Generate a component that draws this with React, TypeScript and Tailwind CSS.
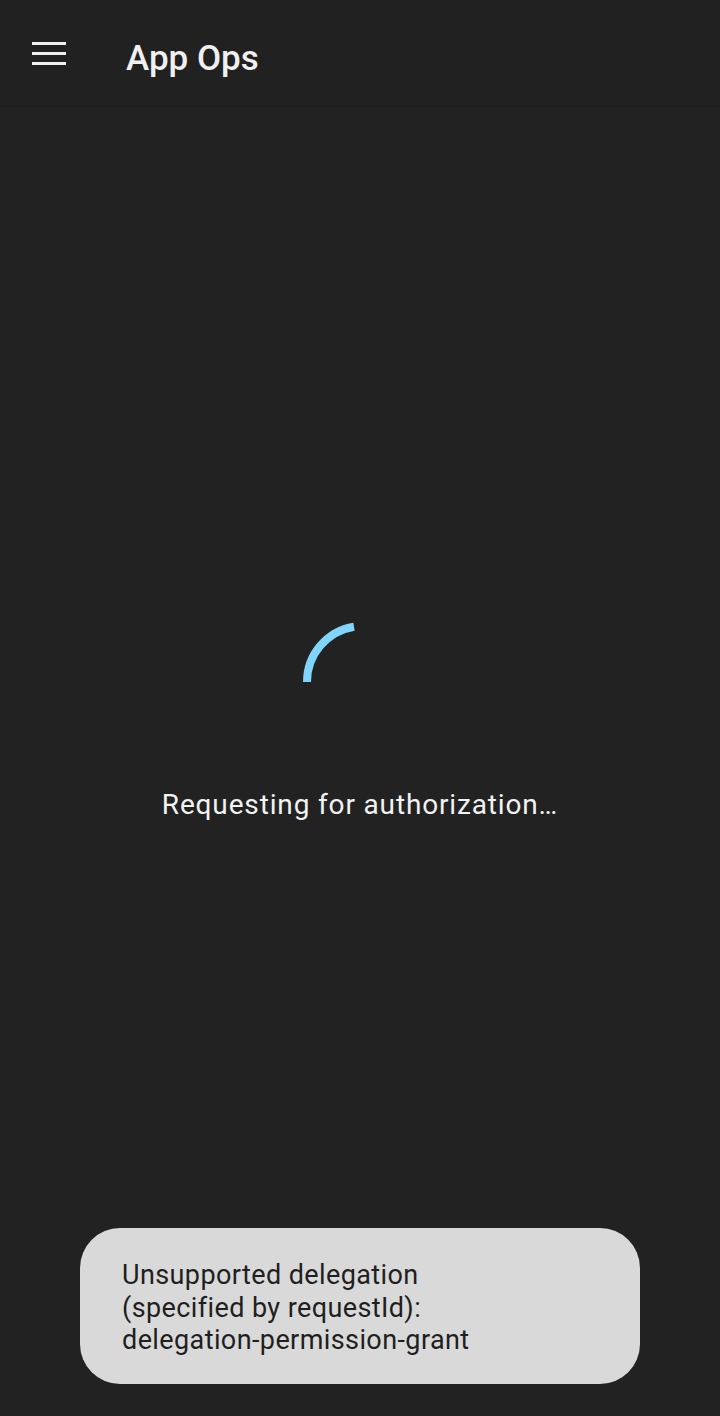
import React from "react";

export default function App() {
  return (
    <div className="w-[720px] h-[1416px] bg-[#222222] flex flex-col overflow-hidden" style={{ fontFamily: "Roboto, 'Noto Sans', sans-serif" }}>
      {/* Toolbar */}
      <header className="h-[107px] shrink-0 bg-[#212121] border-b border-[#1c1c1c] flex items-center">
        <div className="w-[98px] pl-[32px] flex flex-col gap-[7px]">
          <div className="w-[34px] h-[3px] bg-[#f0f0f0]" />
          <div className="w-[34px] h-[3px] bg-[#f0f0f0]" />
          <div className="w-[34px] h-[3px] bg-[#f0f0f0]" />
        </div>
        <h1 className="ml-[28px] text-[35px] font-medium text-[#f0f0f0] leading-none pt-[10px]">App Ops</h1>
      </header>

      {/* Content */}
      <main className="flex-1 flex flex-col items-center relative">
        <div className="mt-[508px]">
          <svg width="124" height="124" viewBox="0 0 124 124">
            <path d="M 9 67 A 56 56 0 0 1 56 11.7" fill="none" stroke="#81d4fa" strokeWidth="8" />
          </svg>
        </div>
        <p className="mt-[52px] text-[28px] leading-none text-[#f2f2f2] tracking-[0.85px]">Requesting for authorization…</p>

        {/* Toast */}
        <div className="absolute left-[80px] top-[1121px] w-[560px] h-[156px] rounded-[40px] bg-[#d9d9d9] pl-[42px] pt-[31px]">
          <p className="text-[27px] leading-[32.5px] tracking-[0.4px] text-[#1f1f1f]">
            Unsupported delegation
            <br />
            (specified by requestId):
            <br />
            delegation-permission-grant
          </p>
        </div>
      </main>
    </div>
  );
}
